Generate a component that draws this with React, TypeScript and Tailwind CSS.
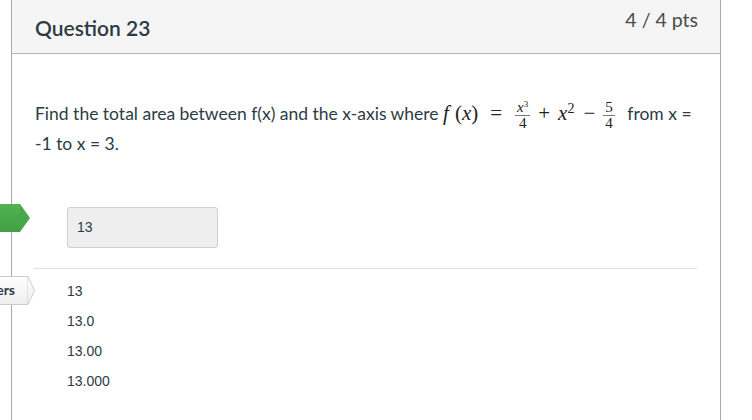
import React from "react";

const Frac = ({ num, den, className = "" }: { num: React.ReactNode; den: React.ReactNode; className?: string }) => (
  <span className={`inline-flex flex-col items-center align-middle font-['Liberation_Serif'] text-[15px] leading-[13px] ${className}`}>
    <span className="border-b border-[#777] px-[2px] pb-[1px]">{num}</span>
    <span className="pt-[1px]">{den}</span>
  </span>
);

const answers = ["13", "13.0", "13.00", "13.000"];

export default function App() {
  return (
    <div className="h-[420px] w-[752px] overflow-hidden bg-white font-['Lato','Liberation_Sans',sans-serif] text-[#2d3b45]">
      <div className="relative ml-[11px] min-h-[420px] w-[710px] border-x border-[#a9a9a9]">
        {/* Header */}
        <div className="flex h-[54px] items-start justify-between border-b border-[#b5b5b5] bg-[#f5f5f5] pl-[23px] pr-[22px]">
          <h2 className="pt-[14px] text-[21px] font-semibold leading-[28px] text-[#2d3b45]">Question 23</h2>
          <span className="pt-[7px] text-[19.5px] leading-[26px] text-[#4a4a4a]">4 / 4 pts</span>
        </div>

        {/* Question text */}
        <div className="pl-[23px] pr-[22px] pt-[46px]">
          <p className="text-[17.5px] leading-[27px]">
            Find the total area between f(x) and the x-axis where{" "}
            <span className="font-['Liberation_Serif'] text-[21px] text-[#222]">
              <i>f</i>
              <span className="ml-[6px]">(</span>
              <i>x</i>)<span className="mx-[12px]">=</span>
              <Frac
                className="ml-[1px]"
                num={
                  <>
                    <i>x</i>
                    <sup className="text-[9px]">3</sup>
                  </>
                }
                den="4"
              />
              <span className="mx-[8px]">+</span>
              <i>x</i>
              <sup className="text-[14px]">2</sup>
              <span className="ml-[9px] mr-[8px]">−</span>
              <Frac num="5" den="4" className="mr-[8px]" />
            </span>{" "}
            from x = -1 to x = 3.
          </p>
        </div>

        {/* Your answer */}
        <div className="relative mt-[50px] pl-[55px]">
          <div className="absolute left-[-40px] top-[-3px] flex h-[28px] items-center">
            <div className="flex h-[28px] w-[48px] items-center bg-gradient-to-b from-[#52b152] to-[#3f9f42]" />
            <div className="h-0 w-0 border-y-[14px] border-l-[10px] border-y-transparent border-l-[#47a74a]" />
          </div>
          <div className="flex h-[41px] w-[151px] items-center rounded-[3px] border border-[#cfcfcf] bg-[#eeeeee] pl-[9px] font-['Liberation_Sans'] text-[14px] text-[#2d3b45]">
            13
          </div>
        </div>

        <div className="ml-[22px] mr-[23px] mt-[20px] border-t border-[#dddddd]" />

        {/* Correct answers */}
        <div className="relative pl-[55px] pt-[8px]">
          <div className="absolute right-[685px] top-[7px] flex h-[29px] items-center">
            <div className="flex h-[29px] items-center whitespace-nowrap rounded-l-[3px] border-y border-l border-[#cccccc] bg-gradient-to-b from-white to-[#eeeeee] pl-[10px] pr-[13px] text-[14px] font-bold leading-none text-[#2d3b45]">
              Correct Answers
            </div>
            <svg width="8" height="29" viewBox="0 0 8 29" className="-ml-px">
              <defs>
                <linearGradient id="wg" x1="0" y1="0" x2="0" y2="1">
                  <stop offset="0" stopColor="#ffffff" />
                  <stop offset="1" stopColor="#eeeeee" />
                </linearGradient>
              </defs>
              <path d="M0 0.5 L1 0.5 L7.5 14.5 L1 28.5 L0 28.5 Z" fill="url(#wg)" stroke="#cccccc" />
            </svg>
          </div>
          <ul className="font-['Liberation_Sans'] text-[14px] text-[#2d3b45]">
            {answers.map((a) => (
              <li key={a} className="flex h-[30px] items-center">
                {a}
              </li>
            ))}
          </ul>
        </div>
      </div>
    </div>
  );
}
